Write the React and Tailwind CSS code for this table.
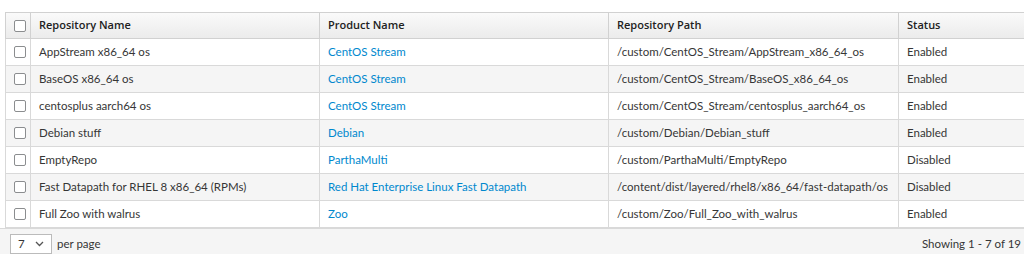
import React from 'react'

const rows = [
  { name: 'AppStream x86_64 os', product: 'CentOS Stream', path: '/custom/CentOS_Stream/AppStream_x86_64_os', status: 'Enabled' },
  { name: 'BaseOS x86_64 os', product: 'CentOS Stream', path: '/custom/CentOS_Stream/BaseOS_x86_64_os', status: 'Enabled' },
  { name: 'centosplus aarch64 os', product: 'CentOS Stream', path: '/custom/CentOS_Stream/centosplus_aarch64_os', status: 'Enabled' },
  { name: 'Debian stuff', product: 'Debian', path: '/custom/Debian/Debian_stuff', status: 'Enabled' },
  { name: 'EmptyRepo', product: 'ParthaMulti', path: '/custom/ParthaMulti/EmptyRepo', status: 'Disabled' },
  { name: 'Fast Datapath for RHEL 8 x86_64 (RPMs)', product: 'Red Hat Enterprise Linux Fast Datapath', path: '/content/dist/layered/rhel8/x86_64/fast-datapath/os', status: 'Disabled' },
  { name: 'Full Zoo with walrus', product: 'Zoo', path: '/custom/Zoo/Full_Zoo_with_walrus', status: 'Enabled' },
]

// plain checkbox drawn as a box
function Check() {
  return <span className="block w-[12px] h-[12px] ml-[8px] border border-[#8b8d8f] rounded-[2px] bg-white" />
}

export default function App() {
  return (
    <div className="w-[1024px] h-[254px] overflow-hidden bg-white pt-[12px] font-['Lato',sans-serif] text-[11.5px] text-[#363636]">
      <table className="ml-[5px] w-[1050px] table-fixed border-collapse">
        <colgroup>
          <col className="w-[25px]" />
          <col className="w-[289px]" />
          <col className="w-[289px]" />
          <col className="w-[290px]" />
          <col className="w-[157px]" />
        </colgroup>
        <thead>
          <tr className="h-[26px] bg-gradient-to-b from-[#fafafa] to-[#ebebeb]">
            <th className="border border-[#d1d1d1]"><Check /></th>
            <th className="border border-[#d1d1d1] text-left pl-[8px] font-['Open_Sans',sans-serif] font-semibold text-[11px] text-[#222]">Repository Name</th>
            <th className="border border-[#d1d1d1] text-left pl-[8px] font-['Open_Sans',sans-serif] font-semibold text-[11px] text-[#222]">Product Name</th>
            <th className="border border-[#d1d1d1] text-left pl-[8px] font-['Open_Sans',sans-serif] font-semibold text-[11px] text-[#222]">Repository Path</th>
            <th className="border border-[#d1d1d1] text-left pl-[8px] font-['Open_Sans',sans-serif] font-semibold text-[11px] text-[#222]">Status</th>
          </tr>
        </thead>
        <tbody>
          {rows.map((r, i) => (
            <tr key={r.name} className={`h-[27px] ${i % 2 ? 'bg-[#f5f5f5]' : 'bg-white'}`}>
              <td className="border border-[#d9d9d9]"><Check /></td>
              <td className="border border-[#d9d9d9] pl-[8px] whitespace-nowrap">{r.name}</td>
              <td className="border border-[#d9d9d9] pl-[8px] whitespace-nowrap text-[#0088ce]">{r.product}</td>
              <td className="border border-[#d9d9d9] pl-[8px] whitespace-nowrap">{r.path}</td>
              <td className="border border-[#d9d9d9] pl-[8px] whitespace-nowrap">{r.status}</td>
            </tr>
          ))}
        </tbody>
      </table>
      <div className="h-[30px] bg-[#f5f5f5] border-t border-[#d9d9d9] flex items-center pl-[10px] pr-[3px]">
        <div className="w-[42px] h-[20px] bg-white border border-[#bbb] flex items-center justify-between px-[7px]">
          <span>7</span>
          <svg width="9" height="6" viewBox="0 0 9 6" fill="none" stroke="#555" strokeWidth="1.3"><path d="M1 1l3.5 3.5L8 1" /></svg>
        </div>
        <span className="ml-[5px]">per page</span>
        <span className="ml-auto">Showing 1 - 7 of 19</span>
      </div>
    </div>
  )
}
